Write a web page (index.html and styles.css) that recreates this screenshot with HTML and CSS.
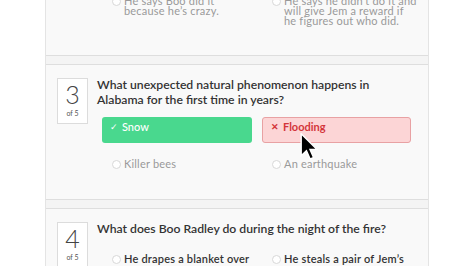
FILE: index.html
```html
<!DOCTYPE html>
<html>
<head>
<meta charset="utf-8">
<link rel="stylesheet" href="styles.css">
</head>
<body>
<div class="quiz">
  <section class="question partial">
    <div class="answers">
      <div class="opt done"><span class="radio"></span><span class="lbl">He says Boo did it<br>because he’s crazy.</span></div>
      <div class="opt done"><span class="radio"></span><span class="lbl">He says he didn’t do it and<br>will give Jem a reward if<br>he figures out who did.</span></div>
    </div>
  </section>
  <section class="question">
    <div class="num"><span class="big">3</span><span class="of">of 5</span></div>
    <div class="body">
      <p class="qtext">What unexpected natural phenomenon happens in<br>Alabama for the first time in years?</p>
      <div class="answers">
        <div class="btn right"><span class="mark">✓</span>Snow</div>
        <div class="btn wrong"><span class="mark">✕</span>Flooding</div>
        <div class="opt done"><span class="radio"></span><span class="lbl">Killer bees</span></div>
        <div class="opt done"><span class="radio"></span><span class="lbl">An earthquake</span></div>
      </div>
    </div>
  </section>
  <section class="question">
    <div class="num"><span class="big">4</span><span class="of">of 5</span></div>
    <div class="body">
      <p class="qtext">What does Boo Radley do during the night of the fire?</p>
      <div class="answers">
        <div class="opt"><span class="radio"></span><span class="lbl">He drapes a blanket over</span></div>
        <div class="opt"><span class="radio"></span><span class="lbl">He steals a pair of Jem’s</span></div>
      </div>
    </div>
  </section>
</div>
<svg class="cursor" width="18" height="27" viewBox="0 0 12 19" aria-hidden="true">
  <path d="M0.5 0.5 L0.5 16 L4.2 12.4 L6.8 18.3 L9.2 17.3 L6.7 11.5 L11.5 11.5 Z" fill="#000" stroke="#fff" stroke-width="1"/>
</svg>
</body>
</html>
```
FILE: styles.css
```css
html, body {
  margin: 0;
  padding: 0;
  background: #fff;
  overflow: hidden;
}
body {
  width: 474px;
  height: 266px;
  font-family: Lato, "Open Sans", sans-serif;
  color: #333;
}
.quiz {
  margin: -12px 0 0 45px;
  width: 382px;
  border-left: 1px solid #e4e4e4;
  border-right: 1px solid #e4e4e4;
  background: #f4f4f4;
  display: flex;
  flex-direction: column;
  gap: 8px;
}
.question {
  display: flex;
  gap: 9px;
  padding: 13px 11px 22px 11px;
  background: #f9f9f9;
  border-top: 1px solid #dedede;
  border-bottom: 1px solid #dedede;
}
.question.partial {
  border-top: none;
  padding: 0 11px 21px 56px;
}
.partial .answers {
  margin: 0;
}
.num {
  flex: none;
  width: 31px;
  height: 46px;
  box-sizing: border-box;
  border: 1px solid #dcdcdc;
  background: #fff;
  display: flex;
  flex-direction: column;
  align-items: center;
  padding-top: 3px;
  color: #444;
}
.num .big {
  font-size: 25px;
  line-height: 24px;
  font-weight: 300;
}
.num .of {
  font-size: 7px;
  line-height: 10px;
  margin-top: 2px;
  color: #555;
}
.body {
  flex: 1;
}
.qtext {
  margin: -1px 0 0 0;
  font-size: 12.2px;
  line-height: 15px;
  font-weight: 600;
  color: #333;
  white-space: nowrap;
}
.answers {
  display: grid;
  grid-template-columns: 150px 149px;
  column-gap: 10px;
  row-gap: 8px;
  margin: 10px 0 0 5px;
}
.btn {
  height: 26px;
  box-sizing: border-box;
  border-radius: 3px;
  display: flex;
  align-items: flex-start;
  padding: 3px 0 0 8px;
  font-size: 11px;
  line-height: 14px;
}
.btn .mark {
  margin-right: 4px;
  font-size: 9px;
}
.btn.right {
  background: #49d88e;
  color: #fff;
  font-weight: 500;
}
.btn.wrong {
  background: #fcd5d6;
  border: 1px solid #e8a1a3;
  padding-top: 2px;
  color: #d4353b;
  font-weight: 700;
}
.opt {
  display: flex;
  align-items: flex-start;
  gap: 3px;
  padding: 8px 0 8px 10px;
  font-size: 11px;
  line-height: 10px;
  color: #333;
  font-weight: 600;
}
.lbl {
  white-space: nowrap;
  letter-spacing: 0.2px;
}
.opt.done {
  color: #9a9a9a;
  font-weight: 400;
}
.radio {
  flex: none;
  width: 7px;
  height: 7px;
  margin-top: 1px;
  border: 1px solid #d8d8d8;
  border-radius: 50%;
  background: #fff;
}
.cursor {
  position: absolute;
  left: 300px;
  top: 133px;
}
```
